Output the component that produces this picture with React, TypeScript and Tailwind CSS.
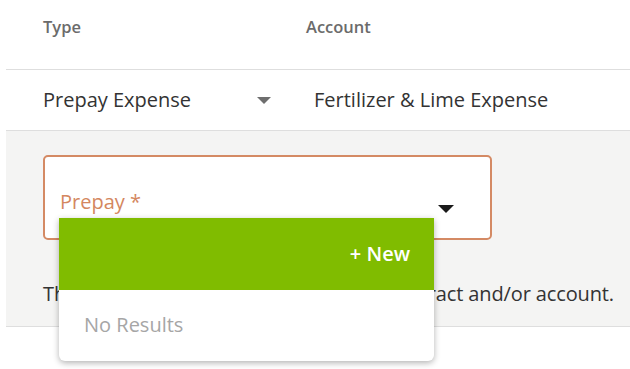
export default function App() {
  return (
    <div
      className="relative w-[630px] h-[369px] bg-white overflow-hidden text-[#333]"
      style={{ fontFamily: "'Open Sans', Lato, sans-serif" }}
    >
      <div className="ml-[6px]">
        {/* header */}
        <div className="flex h-[70px] items-center border-b border-[#dedede] pb-[15px]">
          <div className="w-[300px] pl-[37px] text-[16.5px] font-semibold text-[#6b6b6b]">Type</div>
          <div className="text-[16.5px] font-semibold text-[#6b6b6b]">Account</div>
        </div>
        {/* row */}
        <div className="flex h-[61px] items-center border-b border-[#dedede]">
          <div className="flex w-[308px] items-center pl-[37px]">
            <span className="w-[214px] text-[20px]">Prepay Expense</span>
            <svg width="14" height="8" viewBox="0 0 14 8" className="mt-[1px]">
              <path d="M0 0 L14 0 L7 7 Z" fill="#6e6e6e" />
            </svg>
          </div>
          <div className="text-[20px]">Fertilizer &amp; Lime Expense</div>
        </div>
        {/* expanded area */}
        <div className="h-[196px] border-b border-[#dedede] bg-[#f4f4f3] pl-[37px] pt-[24px]">
          <div className="relative flex h-[85px] w-[449px] items-end justify-between rounded-[5px] border-2 border-[#d48a64] bg-white pb-[26px] pl-[15px] pr-[36px]">
            <span className="text-[20px] leading-none text-[#d4875f]">Prepay *</span>
            <svg width="16" height="9" viewBox="0 0 16 9" className="mb-[-2px]">
              <path d="M0 0 L16 0 L8 8 Z" fill="#1a1a1a" />
            </svg>
          </div>
          <div className="mt-[44px] whitespace-nowrap text-[20px] leading-none tracking-[-0.13px]">
            This prepay will get applied onto that contract and/or account.
          </div>
        </div>
      </div>

      {/* dropdown menu overlay */}
      <div className="absolute left-[59px] top-[218px] w-[375px] overflow-hidden rounded-b-[6px] bg-white shadow-[0_2px_6px_rgba(0,0,0,0.3)]">
        <div className="flex h-[72px] items-center justify-end bg-[#80bc00] pr-[24px]">
          <span className="text-[20px] font-semibold text-white">+ New</span>
        </div>
        <div className="flex h-[71px] items-center pl-[25px] pb-[1px]">
          <span className="text-[20px] text-[#a6a6a6]">No Results</span>
        </div>
      </div>
    </div>
  );
}
